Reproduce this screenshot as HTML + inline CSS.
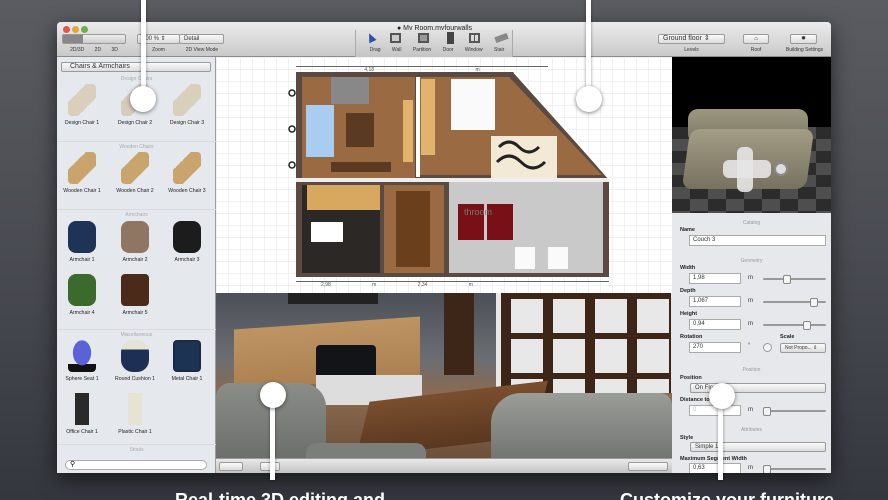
<!DOCTYPE html>
<html><head><meta charset="utf-8">
<style>
*{margin:0;padding:0;box-sizing:border-box}
html,body{width:888px;height:500px;overflow:hidden}
body{position:relative;font-family:"Liberation Sans",sans-serif;background:linear-gradient(#5a5c61,#45484e 60%,#34373e);}
.a{position:absolute}
.win{left:57px;top:22px;width:774px;height:451px;background:#d9d9d9;box-shadow:0 6px 20px rgba(0,0,0,.6);border-radius:4px 4px 0 0;overflow:hidden}
.tb{left:0;top:0;width:774px;height:35px;background:linear-gradient(#ececec,#c9c9c9);border-bottom:1px solid #8c8c8c}
.lbl{font-size:5px;color:#333;text-align:center}
.btn{background:linear-gradient(#fafafa,#dcdcdc);border:1px solid #9a9a9a;border-radius:2px;font-size:6px;color:#333;padding-left:4px;line-height:8px}
.left{left:0;top:35px;width:159px;height:416px;background:#e5e8ed;border-right:1px solid #9a9a9a}
.it{position:absolute;width:50px;text-align:center;font-size:5.2px;color:#222}
.ic{width:28px;height:32px;margin:0 auto 4px;border-radius:4px}
.sec{position:absolute;left:0;width:159px;text-align:center;font-size:5px;color:#aaa;border-top:1px solid #d8dadf;padding-top:2px}
.props{left:615px;top:191px;width:159px;height:260px;background:#e6e8ec}
.pl{position:absolute;font-size:5.5px;font-weight:bold;color:#222}
.in{position:absolute;background:#fff;border:1px solid #aaa;font-size:6px;color:#333;padding-left:3px;line-height:9px;height:11px}
.sh{position:absolute;left:0;width:159px;text-align:center;font-size:5px;color:#999}
.sl{position:absolute;height:2px;background:#999;border-radius:1px}
.sl:after{content:"";position:absolute;width:6px;height:7px;background:#f4f4f4;border:1px solid #888;border-radius:2px;top:-3px;left:var(--k)}
.m{position:absolute;font-size:6px;color:#333}
.line{position:absolute;width:5px;background:#fff;box-shadow:0 0 3px rgba(0,0,0,.4)}
.dot{position:absolute;width:26px;height:26px;border-radius:50%;background:#fff;box-shadow:0 1px 4px rgba(0,0,0,.5)}
.cap{position:absolute;color:#fff;font-weight:bold;font-size:18px;top:490px}
</style></head><body>

<div class="a win">
 <div class="a tb">
  <div class="a" style="left:6px;top:4px;width:7px;height:7px;border-radius:50%;background:#e0564e"></div>
  <div class="a" style="left:15px;top:4px;width:7px;height:7px;border-radius:50%;background:#e2a73a"></div>
  <div class="a" style="left:24px;top:4px;width:7px;height:7px;border-radius:50%;background:#6ab04a"></div>
  <div class="a" style="left:340px;top:3px;font-size:7px;color:#222">● My Room.myfourwalls</div>
  <div class="a btn" style="left:5px;top:12px;width:64px;height:10px;background:linear-gradient(#eee,#ccc)"><span style="display:inline-block;width:20px;height:8px;background:#888;margin-left:-4px"></span></div>
  <div class="a lbl" style="left:5px;top:25px;width:64px;word-spacing:9px">2D/3D 2D 3D</div>
  <div class="a btn" style="left:80px;top:12px;width:43px;height:10px">100 % ⇕</div>
  <div class="a lbl" style="left:80px;top:25px;width:43px">Zoom</div>
  <div class="a btn" style="left:122px;top:12px;width:45px;height:10px">Detail</div>
  <div class="a lbl" style="left:120px;top:25px;width:50px">2D View Mode</div>
  <div class="a" style="left:298px;top:8px;width:158px;height:27px;border-left:1px solid #aaa;border-right:1px solid #aaa;background:linear-gradient(#e2e2e2,#c4c4c4)"></div>
  <div class="a" style="left:310px;top:11px;width:0;height:0;border-left:4px solid transparent;border-right:4px solid transparent;border-bottom:9px solid #2a4fb3;transform:rotate(-25deg)"></div>
  <div class="a" style="left:333px;top:11px;width:11px;height:10px;border:2px solid #555;background:#ccc"></div>
  <div class="a" style="left:361px;top:11px;width:11px;height:10px;border:2px solid #555;background:#999"></div>
  <div class="a" style="left:390px;top:10px;width:7px;height:12px;background:#444"></div>
  <div class="a" style="left:412px;top:11px;width:11px;height:10px;border:2px solid #555;background:linear-gradient(90deg,transparent 3px,#555 3px 4px,transparent 4px)"></div>
  <div class="a" style="left:438px;top:13px;width:13px;height:6px;background:#888;transform:rotate(-20deg)"></div>
  <div class="a lbl" style="left:300px;top:25px;width:160px;word-spacing:10px">Drag Wall Partition Door Window Stair</div>
  <div class="a btn" style="left:601px;top:12px;width:67px;height:10px;font-size:7px">Ground floor ⇕</div>
  <div class="a lbl" style="left:601px;top:25px;width:67px">Levels</div>
  <div class="a btn" style="left:686px;top:12px;width:26px;height:10px;text-align:center;padding:0">⌂</div>
  <div class="a lbl" style="left:686px;top:25px;width:26px">Roof</div>
  <div class="a btn" style="left:733px;top:12px;width:27px;height:10px;text-align:center;padding:0">✹</div>
  <div class="a lbl" style="left:720px;top:25px;width:55px">Building Settings</div>
 </div>

 <div class="a left">
  <div class="a btn" style="left:4px;top:5px;width:150px;height:10px;font-size:7px;padding-left:8px">Chairs &amp; Armchairs</div>
  <div class="sec" style="top:17px;border:0">Design Chairs</div>
  <div class="it" style="left:0;top:27px"><div class="ic" style="background:linear-gradient(135deg,transparent 30%,#d9cfbd 30% 70%,transparent 70%)"></div>Design Chair 1</div>
  <div class="it" style="left:53px;top:27px"><div class="ic" style="background:linear-gradient(135deg,transparent 30%,#d5ccbb 30% 70%,transparent 70%)"></div>Design Chair 2</div>
  <div class="it" style="left:105px;top:27px"><div class="ic" style="background:linear-gradient(135deg,transparent 30%,#d9cfbd 30% 70%,transparent 70%)"></div>Design Chair 3</div>
  <div class="sec" style="top:84px">Wooden Chairs</div>
  <div class="it" style="left:0;top:95px"><div class="ic" style="background:linear-gradient(135deg,transparent 30%,#c9a46c 30% 70%,transparent 70%)"></div>Wooden Chair 1</div>
  <div class="it" style="left:53px;top:95px"><div class="ic" style="background:linear-gradient(135deg,transparent 30%,#c9a46c 30% 70%,transparent 70%)"></div>Wooden Chair 2</div>
  <div class="it" style="left:105px;top:95px"><div class="ic" style="background:linear-gradient(135deg,transparent 30%,#c9a46c 30% 70%,transparent 70%)"></div>Wooden Chair 3</div>
  <div class="sec" style="top:152px">Armchairs</div>
  <div class="it" style="left:0;top:164px"><div class="ic" style="background:#1f3356;border-radius:8px"></div>Armchair 1</div>
  <div class="it" style="left:53px;top:164px"><div class="ic" style="background:#8f7663;border-radius:8px"></div>Armchair 2</div>
  <div class="it" style="left:105px;top:164px"><div class="ic" style="background:#1c1c1c;border-radius:8px"></div>Armchair 3</div>
  <div class="it" style="left:0;top:217px"><div class="ic" style="background:#3b6a2c;border-radius:8px"></div>Armchair 4</div>
  <div class="it" style="left:53px;top:217px"><div class="ic" style="background:#4b2a1a;border-radius:4px"></div>Armchair 5</div>
  <div class="sec" style="top:272px">Miscellaneous</div>
  <div class="it" style="left:0;top:283px"><div class="ic" style="background:radial-gradient(ellipse at 50% 40%,#5b62d8 45%,transparent 47%),linear-gradient(transparent 75%,#111 75%)"></div>Sphere Seat 1</div>
  <div class="it" style="left:53px;top:283px"><div class="ic" style="background:linear-gradient(#e6e2d6 30%,#1d2f55 30%);border-radius:12px"></div>Round Cushion 1</div>
  <div class="it" style="left:105px;top:283px"><div class="ic" style="border:2px solid #1a2a44;background:#1d3354"></div>Metal Chair 1</div>
  <div class="it" style="left:0;top:336px"><div class="ic" style="background:linear-gradient(90deg,transparent 25%,#2a2a2a 25% 75%,transparent 75%)"></div>Office Chair 1</div>
  <div class="it" style="left:53px;top:336px"><div class="ic" style="background:linear-gradient(90deg,transparent 25%,#e8e2d4 25% 75%,transparent 75%)"></div>Plastic Chair 1</div>
  <div class="sec" style="top:387px">Stools</div>
  <div class="a" style="left:8px;top:403px;width:142px;height:10px;border-radius:5px;background:#fff;border:1px solid #aaa;font-size:7px;line-height:8px;padding-left:4px">⚲</div>
 </div>

 <!-- floor plan -->
 <div class="a" style="left:159px;top:35px;width:456px;height:236px;background:#fff;background-image:linear-gradient(#f0f0f0 1px,transparent 1px),linear-gradient(90deg,#f0f0f0 1px,transparent 1px);background-size:12px 12px;overflow:hidden">
  <div class="a" style="left:-57px;top:0;width:513px;height:236px">
  <div class="a" style="left:137px;top:9px;width:252px;font-size:5px;color:#555;text-align:center;border-top:1px solid #666;word-spacing:100px">4,18&nbsp;m 4,08&nbsp;m</div>
  <svg class="a" style="left:0;top:0" width="513" height="236">
   <polygon points="137,15 355,15 450,123 450,220 137,220" fill="#5b4a42"/>
   <rect x="143" y="20" width="113" height="101" fill="#9a6a42"/>
   <polygon points="261,20 350,20 443,118 261,118" fill="#9a6a42"/>
   <rect x="143" y="128" width="78" height="88" fill="#2c2826"/>
   <rect x="148" y="128" width="73" height="25" fill="#d8a861"/>
   <rect x="225" y="128" width="60" height="88" fill="#9a6a42"/>
   <rect x="237" y="134" width="34" height="76" fill="#6a3f1c"/>
   <rect x="290" y="124" width="154" height="92" fill="#c9c9c9"/>
   <rect x="147" y="48" width="28" height="52" fill="#a8cdf0"/>
   <rect x="172" y="20" width="38" height="27" fill="#888"/>
   <rect x="187" y="56" width="28" height="34" fill="#5a3a20"/>
   <rect x="172" y="105" width="60" height="10" fill="#5a3a20"/>
   <rect x="244" y="43" width="10" height="62" fill="#e2b36f"/>
   <rect x="257" y="20" width="4" height="100" fill="#fff"/>
   <rect x="262" y="22" width="14" height="76" fill="#e2b36f"/>
   <rect x="292" y="22" width="44" height="51" fill="#fafafa"/>
   <rect x="332" y="79" width="66" height="42" fill="#f3ead6"/>
   <path d="M340 90 q10 -10 20 0 t20 0 M338 105 q12 -12 24 0 t24 0" stroke="#222" stroke-width="3" fill="none"/>
   <rect x="299" y="147" width="26" height="36" fill="#7a1017"/>
   <rect x="328" y="147" width="26" height="36" fill="#7a1017"/>
   <rect x="356" y="190" width="20" height="22" fill="#fafafa"/>
   <rect x="389" y="190" width="20" height="22" fill="#fafafa"/>
   <rect x="152" y="165" width="32" height="20" fill="#fff"/>
   <rect x="137" y="121" width="313" height="4" fill="#eee"/>
   <line x1="355" y1="15" x2="452" y2="123" stroke="#fff" stroke-width="2"/>
   <circle cx="133" cy="36" r="3" fill="none" stroke="#222" stroke-width="1.5"/>
   <circle cx="133" cy="72" r="3" fill="none" stroke="#222" stroke-width="1.5"/>
   <circle cx="133" cy="108" r="3" fill="none" stroke="#222" stroke-width="1.5"/>
  </svg>
  <div class="a" style="left:137px;top:224px;width:313px;font-size:5px;color:#555;border-top:1px solid #666;word-spacing:40px;padding-left:25px">2,98&nbsp;m 2,34&nbsp;m &nbsp; &nbsp; &nbsp; &nbsp; 5,12&nbsp;m</div>
  <div class="a" style="left:305px;top:150px;font-size:9px;color:#777">throom</div>
  </div>
 </div>

 <!-- 3D view -->
 <div class="a" style="left:159px;top:271px;width:456px;height:165px;background:linear-gradient(#4c4f56,#6b6e73 40%,#8c6a4e 62%,#6d5039);overflow:hidden">
  <div class="a" style="left:72px;top:0;width:90px;height:11px;background:#222"></div>
  <div class="a" style="left:18px;top:30px;width:186px;height:60px;transform:skewY(-4deg);opacity:.9;background:linear-gradient(#c99a63,#b1824f)"></div>
  <div class="a" style="left:100px;top:52px;width:60px;height:38px;background:#121418;border-radius:4px"></div>
  <div class="a" style="left:100px;top:82px;width:106px;height:30px;background:#ddd"></div>
  <div class="a" style="left:228px;top:0;width:30px;height:82px;background:#3d2518"></div>
  <div class="a" style="left:280px;top:0;width:176px;height:100px;background:#e8e8e8"></div>
  <div class="a" style="left:285px;top:0;width:170px;height:100px;background:repeating-linear-gradient(90deg,#3d2518 0 10px,transparent 10px 42px),repeating-linear-gradient(#3d2518 0 6px,transparent 6px 40px)"></div>
  <div class="a" style="left:150px;top:98px;width:172px;height:56px;background:linear-gradient(#7a4f2e,#5a3720);transform:skewX(-20deg) rotate(-7deg)"></div>
  <div class="a" style="left:0;top:90px;width:110px;height:75px;background:linear-gradient(#8a8d88,#6c6f6b);border-radius:14px 24px 0 0"></div>
  <div class="a" style="left:90px;top:150px;width:120px;height:25px;background:#7b7e7a;border-radius:10px"></div>
  <div class="a" style="left:275px;top:100px;width:181px;height:65px;background:linear-gradient(#9a9d98,#727571);border-radius:30px 12px 0 0"></div>
 </div>
 <div class="a" style="left:159px;top:436px;width:456px;height:15px;background:linear-gradient(#e8e8e8,#c4c4c4);border-top:1px solid #999">
  <div class="a btn" style="left:3px;top:3px;width:24px;height:9px"></div>
  <div class="a btn" style="left:44px;top:3px;width:20px;height:9px"></div>
  <div class="a btn" style="left:412px;top:3px;width:40px;height:9px"></div>
 </div>

 <!-- preview -->
 <div class="a" style="left:615px;top:35px;width:159px;height:156px;background:linear-gradient(#000 45%,#333 45%);overflow:hidden">
  <div class="a" style="left:0;top:70px;width:159px;height:86px;background:repeating-conic-gradient(#555 0 25%,#2a2a2a 0 50%) 0 0/36px 24px;opacity:.8"></div>
  <div class="a" style="left:16px;top:52px;width:120px;height:30px;background:linear-gradient(#9d977f,#7f7a66);border-radius:10px 10px 4px 4px"></div>
  <div class="a" style="left:14px;top:72px;width:124px;height:60px;background:linear-gradient(#a39d86,#77725f);border-radius:10px;transform:skewX(-8deg)"></div>
  <div class="a" style="left:51px;top:103px;width:48px;height:18px;background:#e6e6e6;border-radius:6px;opacity:.9"></div>
  <div class="a" style="left:65px;top:90px;width:16px;height:45px;background:#e6e6e6;border-radius:6px;opacity:.9"></div>
  <div class="a" style="left:102px;top:105px;width:14px;height:14px;border-radius:50%;background:#ddd;border:2px solid #888"></div>
 </div>

 <!-- properties -->
 <div class="a props">
  <div class="sh" style="top:7px">Catalog</div>
  <div class="pl" style="left:8px;top:14px">Name</div>
  <div class="in" style="left:17px;top:22px;width:137px">Couch 3</div>
  <div class="sh" style="top:45px">Geometry</div>
  <div class="pl" style="left:8px;top:52px">Width</div>
  <div class="in" style="left:17px;top:60px;width:52px">1,98</div><div class="m" style="left:76px;top:62px">m</div>
  <div class="sl" style="left:91px;top:65px;width:63px;--k:20px"></div>
  <div class="pl" style="left:8px;top:75px">Depth</div>
  <div class="in" style="left:17px;top:83px;width:52px">1,067</div><div class="m" style="left:76px;top:85px">m</div>
  <div class="sl" style="left:91px;top:88px;width:63px;--k:47px"></div>
  <div class="pl" style="left:8px;top:98px">Height</div>
  <div class="in" style="left:17px;top:106px;width:52px">0,94</div><div class="m" style="left:76px;top:108px">m</div>
  <div class="sl" style="left:91px;top:111px;width:63px;--k:40px"></div>
  <div class="pl" style="left:8px;top:121px">Rotation</div><div class="pl" style="left:108px;top:121px">Scale</div>
  <div class="in" style="left:17px;top:129px;width:52px">270</div><div class="m" style="left:76px;top:130px">°</div>
  <div class="a" style="left:91px;top:130px;width:9px;height:9px;border-radius:50%;border:1px solid #999;background:#f4f4f4"></div>
  <div class="a btn" style="left:108px;top:130px;width:46px;height:10px;font-size:5px">Not Propo... ⇕</div>
  <div class="sh" style="top:154px">Position</div>
  <div class="pl" style="left:8px;top:162px">Position</div>
  <div class="a btn" style="left:18px;top:170px;width:136px;height:10px">On Floor</div>
  <div class="pl" style="left:8px;top:184px">Distance to floor</div>
  <div class="in" style="left:17px;top:192px;width:52px;color:#bbb">0</div><div class="m" style="left:76px;top:194px">m</div>
  <div class="sl" style="left:91px;top:197px;width:63px;--k:0px"></div>
  <div class="sh" style="top:214px">Attributes</div>
  <div class="pl" style="left:8px;top:222px">Style</div>
  <div class="a btn" style="left:18px;top:229px;width:136px;height:10px">Simple 1</div>
  <div class="pl" style="left:8px;top:243px">Maximum Segment Width</div>
  <div class="in" style="left:17px;top:250px;width:52px">0,63</div><div class="m" style="left:76px;top:252px">m</div>
  <div class="sl" style="left:91px;top:255px;width:63px;--k:0px"></div>
 </div>
</div>

<!-- callouts -->
<div class="line" style="left:141px;top:0;height:96px"></div><div class="dot" style="left:130px;top:86px"></div>
<div class="line" style="left:586px;top:0;height:90px"></div><div class="dot" style="left:576px;top:86px"></div>
<div class="line" style="left:270px;top:395px;height:85px"></div><div class="dot" style="left:260px;top:382px"></div>
<div class="line" style="left:718px;top:398px;height:82px"></div><div class="dot" style="left:709px;top:383px"></div>
<div class="cap" style="left:175px">Real-time 3D editing and</div>
<div class="cap" style="left:620px">Customize your furniture</div>
</body></html>
